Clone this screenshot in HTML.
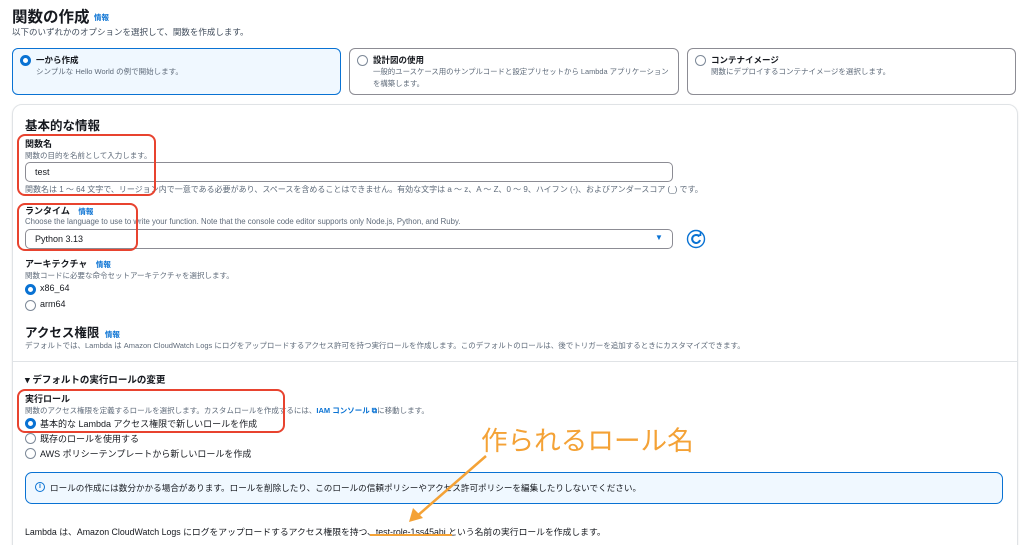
<!DOCTYPE html>
<html><head><meta charset="utf-8"><style>
*{margin:0;padding:0;box-sizing:border-box}
html,body{width:1024px;height:545px;overflow:hidden}
body{background:#fff;font-family:"Liberation Sans","Noto Sans CJK JP",sans-serif;color:#16191f;position:relative}
.a{position:absolute;white-space:nowrap}
.lnk{color:#0972d3;font-size:7.5px;font-weight:bold}
.d{font-size:7.5px;color:#5f6b7a}
.lb{font-size:9px;font-weight:bold}
.card{position:absolute;top:48px;height:47px;border:1px solid #8c8c94;border-radius:6px;background:#fff}
.rad{position:absolute;width:11px;height:11px;border-radius:50%;border:1.5px solid #7d8998;background:#fff}
.rad.on{border:3.5px solid #0972d3}
.inp{position:absolute;border:1px solid #8c8c94;border-radius:5px;background:#fff;font-size:9px;padding-left:9px;line-height:18px}
.rb{position:absolute;border:2px solid #e8432f;border-radius:8px}
</style></head><body>
<div class="a" style="left:12px;top:5px;font-size:15.5px;font-weight:bold">関数の作成</div>
<div class="a lnk" style="left:94px;top:12px">情報</div>
<div class="a" style="left:12px;top:26px;font-size:8.5px;color:#414d5c">以下のいずれかのオプションを選択して、関数を作成します。</div>

<div class="card" style="left:12px;width:329px;border-color:#0972d3;background:#f0f8ff"></div>
<div class="rad on" style="left:20px;top:55px"></div>
<div class="a" style="left:36px;top:54px;font-size:8.5px;font-weight:bold">一から作成</div>
<div class="a d" style="left:36px;top:66px">シンプルな Hello World の例で開始します。</div>

<div class="card" style="left:349px;width:330px"></div>
<div class="rad" style="left:357px;top:55px"></div>
<div class="a" style="left:373px;top:54px;font-size:8.5px;font-weight:bold">設計図の使用</div>
<div class="a d" style="left:373px;top:66px;line-height:12px;font-size:7.4px">一般的ユースケース用のサンプルコードと設定プリセットから Lambda アプリケーション<br>を構築します。</div>

<div class="card" style="left:687px;width:329px"></div>
<div class="rad" style="left:695px;top:55px"></div>
<div class="a" style="left:711px;top:54px;font-size:8.5px;font-weight:bold">コンテナイメージ</div>
<div class="a d" style="left:711px;top:66px">関数にデプロイするコンテナイメージを選択します。</div>

<div style="position:absolute;left:12px;top:104px;width:1006px;height:460px;border:1px solid #e0e3e6;border-radius:10px;box-shadow:0 1px 2px rgba(0,0,0,.08)"></div>
<div class="a" style="left:25px;top:115px;font-size:12.5px;font-weight:bold">基本的な情報</div>

<div class="a lb" style="left:25px;top:137px">関数名</div>
<div class="a d" style="left:25px;top:150px">関数の目的を名前として入力します。</div>
<div class="inp" style="left:25px;top:162px;width:648px;height:20px">test</div>
<div class="a d" style="left:25px;top:184px;font-size:8px">関数名は 1 ～ 64 文字で、リージョン内で一意である必要があり、スペースを含めることはできません。有効な文字は a ～ z、A ～ Z、0 ～ 9、ハイフン (-)、およびアンダースコア (_) です。</div>

<div class="a lb" style="left:25px;top:204px">ランタイム <span class="lnk" style="margin-left:6px">情報</span></div>
<div class="a d" style="left:25px;top:217px;font-size:7.8px">Choose the language to use to write your function. Note that the console code editor supports only Node.js, Python, and Ruby.</div>
<div class="inp" style="left:25px;top:229px;width:648px;height:20px">Python 3.13</div>
<div class="a" style="left:655px;top:233px;font-size:8px;color:#0972d3">▼</div>
<svg class="a" style="left:686px;top:229px" width="20" height="20" viewBox="0 0 20 20"><circle cx="10" cy="10" r="8.5" fill="none" stroke="#0972d3" stroke-width="1.4"/><path d="M13.3 7.5A4 4 0 1 0 14 11" fill="none" stroke="#0972d3" stroke-width="2"/><path d="M11 6.2h3.5v-3.2" fill="none" stroke="#0972d3" stroke-width="1.6"/></svg>

<div class="a lb" style="left:25px;top:257px">アーキテクチャ <span class="lnk" style="margin-left:6px">情報</span></div>
<div class="a d" style="left:25px;top:270px">関数コードに必要な命令セットアーキテクチャを選択します。</div>
<div class="rad on" style="left:25px;top:284px"></div>
<div class="a" style="left:40px;top:283px;font-size:9px">x86_64</div>
<div class="rad" style="left:25px;top:300px"></div>
<div class="a" style="left:40px;top:299px;font-size:9px">arm64</div>

<div class="a" style="left:25px;top:322px;font-size:12.5px;font-weight:bold">アクセス権限 <span class="lnk" style="margin-left:2px">情報</span></div>
<div class="a d" style="left:25px;top:340px">デフォルトでは、Lambda は Amazon CloudWatch Logs にログをアップロードするアクセス許可を持つ実行ロールを作成します。このデフォルトのロールは、後でトリガーを追加するときにカスタマイズできます。</div>
<div style="position:absolute;left:12px;top:361px;width:1006px;height:1px;background:#e0e3e6"></div>

<div class="a" style="left:25px;top:372px;font-size:9.5px;font-weight:bold">▾ デフォルトの実行ロールの変更</div>
<div class="a lb" style="left:25px;top:392px">実行ロール</div>
<div class="a d" style="left:25px;top:405px">関数のアクセス権限を定義するロールを選択します。カスタムロールを作成するには、<span style="color:#0972d3;font-weight:bold">IAM コンソール ⧉</span>に移動します。</div>
<div class="rad on" style="left:25px;top:418px"></div>
<div class="a" style="left:40px;top:417px;font-size:9px">基本的な Lambda アクセス権限で新しいロールを作成</div>
<div class="rad" style="left:25px;top:433px"></div>
<div class="a" style="left:40px;top:432px;font-size:9px">既存のロールを使用する</div>
<div class="rad" style="left:25px;top:448px"></div>
<div class="a" style="left:40px;top:447px;font-size:9px">AWS ポリシーテンプレートから新しいロールを作成</div>

<div style="position:absolute;left:25px;top:472px;width:978px;height:32px;border:1px solid #0972d3;border-radius:7px;background:#f0f8ff"></div>
<div class="a" style="left:35px;top:482px;width:10px;height:10px;border:1.3px solid #0972d3;border-radius:50%;font-size:7px;color:#0972d3;text-align:center;line-height:8px;font-weight:bold">i</div>
<div class="a" style="left:50px;top:482px;font-size:8.6px">ロールの作成には数分かかる場合があります。ロールを削除したり、このロールの信頼ポリシーやアクセス許可ポリシーを編集したりしないでください。</div>

<div class="a" style="left:25px;top:525px;font-size:8.8px">Lambda は、Amazon CloudWatch Logs にログをアップロードするアクセス権限を持つ、<span>test-role-1ss45ahi</span> という名前の実行ロールを作成します。</div>

<div class="rb" style="left:17px;top:134px;width:139px;height:62px"></div>
<div class="rb" style="left:17px;top:203px;width:121px;height:48px"></div>
<div class="rb" style="left:17px;top:389px;width:268px;height:44px"></div>

<div class="a" style="left:481px;top:419px;font-size:26.6px;color:#f4a236">作られるロール名</div>
<svg class="a" style="left:0;top:0" width="1024" height="545"><line x1="486" y1="456" x2="416" y2="517" stroke="#f4a236" stroke-width="2.5"/><path d="M409 522L413 508L423 518Z" fill="#f4a236"/><line x1="370" y1="535" x2="452" y2="535" stroke="#f4a236" stroke-width="2"/></svg>
</body></html>
